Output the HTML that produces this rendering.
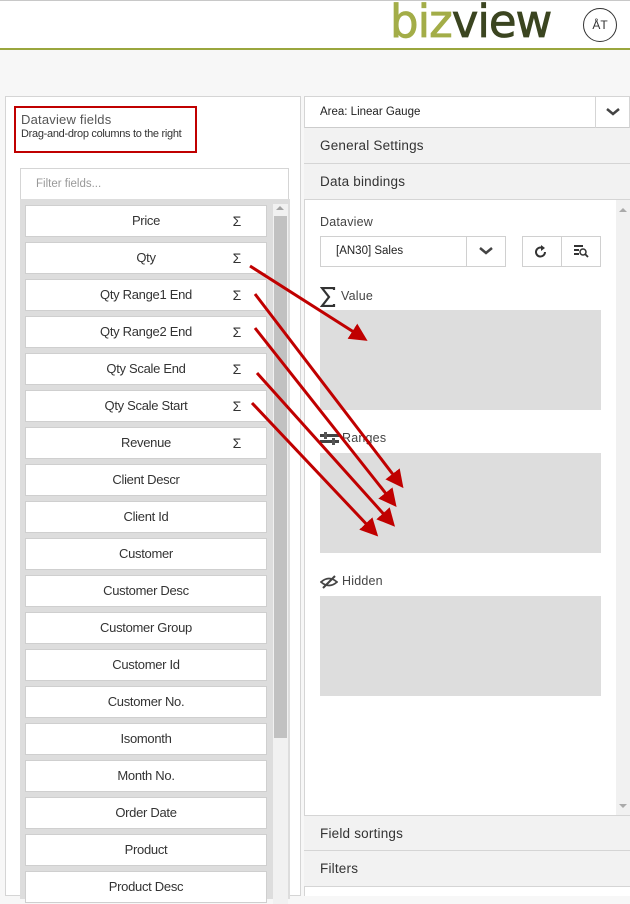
<!DOCTYPE html>
<html><head><style>
*{box-sizing:border-box;margin:0;padding:0}
body{width:630px;height:894px;overflow:hidden;background:#f7f7f7;font-family:"Liberation Sans",sans-serif;position:relative;color:#333}
.abs{position:absolute}
.item{position:absolute;left:25px;width:242px;height:32px;background:#fff;border:1px solid #cfcfcf;font-size:13px;letter-spacing:-0.3px;text-align:center;line-height:30px;color:#333}
.item span{position:absolute;right:25px;top:0;font-size:14px}
.hdr{position:absolute;left:304px;width:326px;height:36px;background:#f2f2f2;border-bottom:1px solid #d5d5d5;font-size:13.5px;padding-left:16px;line-height:36px;color:#333;letter-spacing:.2px}
.lbl{position:absolute;left:320px;font-size:12.5px;color:#444;letter-spacing:.2px}
.box{position:absolute;left:320px;width:281px;height:100px;background:#dddddd}
</style></head><body>
<div class="abs" style="left:0;top:0;width:630px;height:48px;background:#fff;border-top:1px solid #c8c8c8"></div>
<div class="abs" style="left:0;top:48px;width:630px;height:2px;background:#9aa63e"></div>
<div class="abs" style="left:390px;top:-5px;font-size:45px;letter-spacing:-1px;font-family:'DejaVu Sans',sans-serif;-webkit-text-stroke:0.8px currentColor;white-space:nowrap"><span style="color:#a3ad48">biz</span><span style="color:#3b4520">view</span></div>
<div class="abs" style="left:583px;top:8px;width:34px;height:34px;border:1px solid #333;border-radius:50%;font-size:12px;text-align:center;line-height:32px;background:#fff">ÅT</div>

<div class="abs" style="left:5px;top:96px;width:296px;height:800px;background:#fff;border:1px solid #d5d5d5"></div>
<div class="abs" style="left:14px;top:106px;width:183px;height:47px;border:2px solid #c00000;padding:4px 5px;white-space:nowrap">
<div style="font-size:13px;color:#555;letter-spacing:.2px">Dataview fields</div>
<div style="font-size:11px;color:#333;letter-spacing:-0.3px;margin-top:1px">Drag-and-drop columns to the right</div></div>
<div class="abs" style="left:20px;top:168px;width:269px;height:32px;border:1px solid #d5d5d5;font-size:11.5px;color:#999;padding-left:15px;line-height:30px;background:#fff">Filter fields...</div>
<div class="abs" style="left:20px;top:199px;width:270px;height:700px;background:#dddddd"></div>
<div class="abs" style="left:273px;top:204px;width:15px;height:700px;background:#f1f1f1"></div>
<div class="abs" style="left:274px;top:216px;width:13px;height:522px;background:#c1c1c1"></div>
<div class="abs" style="left:276px;top:206px;width:0;height:0;border:4px solid transparent;border-bottom-color:#a3a3a3;border-top:0"></div>

<div class="item" style="top:205px">Price<span>Σ</span></div>
<div class="item" style="top:242px">Qty<span>Σ</span></div>
<div class="item" style="top:279px">Qty Range1 End<span>Σ</span></div>
<div class="item" style="top:316px">Qty Range2 End<span>Σ</span></div>
<div class="item" style="top:353px">Qty Scale End<span>Σ</span></div>
<div class="item" style="top:390px">Qty Scale Start<span>Σ</span></div>
<div class="item" style="top:427px">Revenue<span>Σ</span></div>
<div class="item" style="top:464px">Client Descr</div>
<div class="item" style="top:501px">Client Id</div>
<div class="item" style="top:538px">Customer</div>
<div class="item" style="top:575px">Customer Desc</div>
<div class="item" style="top:612px">Customer Group</div>
<div class="item" style="top:649px">Customer Id</div>
<div class="item" style="top:686px">Customer No.</div>
<div class="item" style="top:723px">Isomonth</div>
<div class="item" style="top:760px">Month No.</div>
<div class="item" style="top:797px">Order Date</div>
<div class="item" style="top:834px">Product</div>
<div class="item" style="top:871px">Product Desc</div>

<div class="abs" style="left:304px;top:96px;width:326px;height:800px;background:#fff;border-left:1px solid #d5d5d5"></div>
<div class="abs" style="left:304px;top:96px;width:326px;height:33px;border:1px solid #d5d5d5;border-bottom:2px solid #ccc;font-size:11.5px;line-height:31px;padding-left:15px;color:#222">Area: Linear Gauge</div>
<div class="abs" style="left:595px;top:96px;width:1px;height:32px;background:#d5d5d5"></div>
<svg class="abs" style="left:605px;top:107px" width="16" height="10"><path d="M2 2 L8 7 L14 2" stroke="#444" stroke-width="2.5" fill="none"/></svg>
<div class="hdr" style="top:128px">General Settings</div>
<div class="hdr" style="top:164px">Data bindings</div>
<div class="abs" style="left:616px;top:200px;width:14px;height:615px;background:#f1f1f1"></div>
<div class="abs" style="left:619px;top:208px;border:4px solid transparent;border-bottom-color:#aaa;border-top:0"></div>
<div class="abs" style="left:619px;top:804px;border:4px solid transparent;border-top-color:#aaa;border-bottom:0"></div>
<div class="hdr" style="top:815px;border-top:1px solid #d5d5d5">Field sortings</div>
<div class="hdr" style="top:851px">Filters</div>

<div class="lbl" style="top:215px">Dataview</div>
<div class="abs" style="left:320px;top:236px;width:186px;height:31px;border:1px solid #d0d0d0;font-size:11.5px;line-height:29px;padding-left:15px;color:#222">[AN30] Sales</div>
<div class="abs" style="left:466px;top:236px;width:1px;height:31px;background:#d0d0d0"></div>
<svg class="abs" style="left:478px;top:246px" width="16" height="10"><path d="M2 2 L8 7 L14 2" stroke="#444" stroke-width="2.5" fill="none"/></svg>
<div class="abs" style="left:522px;top:236px;width:79px;height:31px;border:1px solid #d0d0d0"></div>
<div class="abs" style="left:561px;top:236px;width:1px;height:31px;background:#d0d0d0"></div>
<svg class="abs" style="left:534px;top:245px" width="14" height="14"><path d="M11 7 A4.5 4.5 0 1 1 8.5 3" stroke="#333" stroke-width="2" fill="none"/><path d="M7 0 L11 3 L7 6Z" fill="#333"/></svg>
<svg class="abs" style="left:573px;top:244px" width="16" height="14"><rect x="1" y="1" width="9" height="2" fill="#333"/><rect x="1" y="5" width="5" height="2" fill="#333"/><rect x="1" y="9" width="5" height="2" fill="#333"/><circle cx="10" cy="8" r="3" stroke="#333" stroke-width="1.5" fill="none"/><path d="M12 10 L15 13" stroke="#333" stroke-width="1.8"/></svg>

<svg class="abs" style="left:320px;top:287px" width="16" height="20"><path d="M14 3 V1 H2 L9 10 L2 19 H14 V17" stroke="#333" stroke-width="2.2" fill="none"/></svg>
<div class="lbl" style="top:289px;left:341px">Value</div>
<div class="box" style="top:310px"></div>
<svg class="abs" style="left:320px;top:432px" width="20" height="14"><rect x="0" y="2" width="19" height="3" fill="#444"/><rect x="0" y="8" width="19" height="3" fill="#444"/><rect x="4" y="0" width="3" height="7" fill="#555"/><rect x="12" y="6" width="3" height="7" fill="#555"/></svg>
<div class="lbl" style="top:431px;left:342px">Ranges</div>
<div class="box" style="top:453px"></div>
<svg class="abs" style="left:320px;top:575px" width="18" height="14"><path d="M1 7 Q9 0 17 7 Q9 14 1 7Z" stroke="#444" stroke-width="1.8" fill="none"/><path d="M3 13 L15 1" stroke="#444" stroke-width="2"/></svg>
<div class="lbl" style="top:574px;left:342px">Hidden</div>
<div class="box" style="top:596px"></div>

<svg class="abs" style="left:0;top:0" width="630" height="894">
<defs><marker id="a" markerWidth="6" markerHeight="6" refX="3" refY="3" orient="auto" markerUnits="strokeWidth"><path d="M0 0 L6 3 L0 6Z" fill="#c00000"/></marker></defs>
<g stroke="#c00000" stroke-width="3" fill="none" marker-end="url(#a)">
<line x1="250" y1="266" x2="360" y2="336"/>
<line x1="255" y1="294" x2="398" y2="481"/>
<line x1="255" y1="328" x2="391" y2="500"/>
<line x1="257" y1="373" x2="389" y2="520"/>
<line x1="252" y1="403" x2="372" y2="530"/>
</g></svg>
</body></html>
